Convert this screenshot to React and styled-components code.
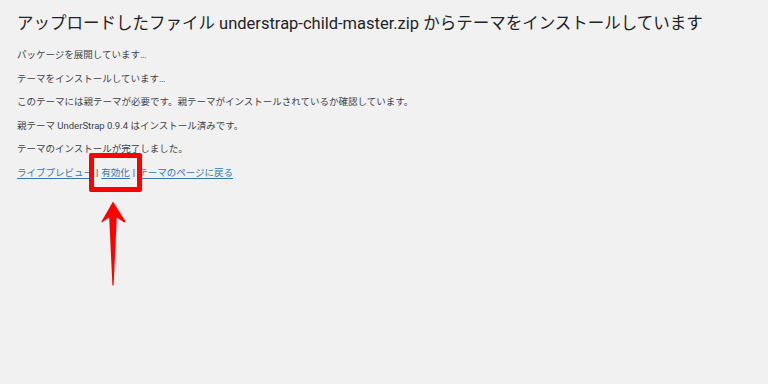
import styled, { createGlobalStyle } from "styled-components";

const GlobalStyle = createGlobalStyle`
  html, body {
    margin: 0;
    padding: 0;
    background: #f1f1f1;
  }
  body {
    font-family: Roboto, "Noto Sans CJK JP", sans-serif;
    color: #3c434a;
  }
`;

const Page = styled.div`
  position: relative;
  width: 768px;
  height: 384px;
  box-sizing: border-box;
  padding: 13px 17px 0 17px;
  overflow: hidden;
`;

const Title = styled.h1`
  margin: 0 0 13px 0;
  font-size: 16.5px;
  font-weight: 400;
  line-height: 22px;
  color: #1d2327;
  white-space: nowrap;
`;

const Log = styled.div`
  display: flex;
  flex-direction: column;
  gap: 9.5px;
`;

const Line = styled.p`
  margin: 0;
  font-size: 9.5px;
  line-height: 14px;
  white-space: nowrap;
`;

const Link = styled.a`
  color: #2f78b5;
  text-decoration: underline;
  text-underline-offset: 1.5px;
  cursor: pointer;
`;

const Sep = styled.span`
  color: #3c434a;
  margin: 0 3px;
`;

const Highlight = styled.div`
  position: absolute;
  left: 89px;
  top: 153px;
  width: 53px;
  height: 39px;
  box-sizing: border-box;
  border: 5px solid #ff0000;
  border-radius: 2px;
`;

const Arrow = styled.svg`
  position: absolute;
  left: 100px;
  top: 200px;
`;

const App = () => {
  return (
    <Page>
      <GlobalStyle />
      <Title>アップロードしたファイル understrap-child-master.zip からテーマをインストールしています</Title>
      <Log>
        <Line>パッケージを展開しています…</Line>
        <Line>テーマをインストールしています…</Line>
        <Line>このテーマには親テーマが必要です。親テーマがインストールされているか確認しています。</Line>
        <Line>親テーマ UnderStrap 0.9.4 はインストール済みです。</Line>
        <Line>テーマのインストールが完了しました。</Line>
        <Line>
          <Link>ライブプレビュー</Link>
          <Sep>|</Sep>
          <Link>有効化</Link>
          <Sep>|</Sep>
          <Link>テーマのページに戻る</Link>
        </Line>
      </Log>
      <Highlight />
      <Arrow width="27" height="88" viewBox="0 0 27 88">
        <path
          d="M13 1.5 L25.5 21.5 Q25 23 23.5 22 L16.8 17.5 L13.6 85.5 L12.4 85.5 L9.2 17.5 L2.5 22 Q1 23 1.5 21.5 Z"
          fill="#ff0000"
        />
      </Arrow>
    </Page>
  );
};

export default App;
